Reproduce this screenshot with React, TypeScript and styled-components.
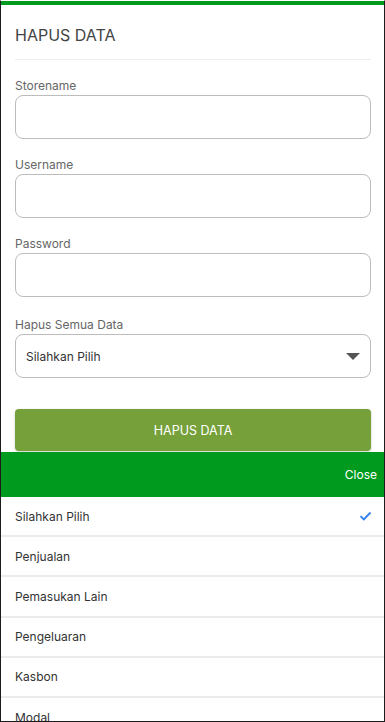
import { createGlobalStyle, styled } from "styled-components";

const GlobalStyle = createGlobalStyle`
  * { box-sizing: border-box; }
  html, body { margin: 0; padding: 0; background: #ffffff; }
  body { font-family: "Inter", "Liberation Sans", sans-serif; }
`;

const Frame = styled.div`
  position: relative;
  width: 385px;
  height: 722px;
  overflow: hidden;
  background: #ffffff;
  border: 1px solid #1c1c1c;
  border-top-color: #ffffff;
`;

const TopBar = styled.div`
  height: 4px;
  background: #009a1e;
`;

const Page = styled.div`
  padding: 0 13px 0 14px;
`;

const Title = styled.h1`
  margin: 0;
  padding: 20px 0 14px;
  font-size: 16px;
  font-weight: 400;
  color: #444444;
  border-bottom: 1px solid #eeeeee;
`;

const Form = styled.form`
  display: flex;
  flex-direction: column;
  padding-top: 19px;
  gap: 19px;
`;

const Field = styled.div<{ $offset?: number }>`
  display: flex;
  flex-direction: column;
  gap: 2px;
  margin-top: ${(p) => p.$offset ?? 0}px;
`;

const Label = styled.label`
  font-size: 12px;
  color: #666666;
  line-height: 14px;
`;

const Input = styled.input`
  height: 44px;
  width: 100%;
  border: 1.5px solid #bcbcbc;
  border-radius: 8px;
  background: #ffffff;
  outline: none;
  font: inherit;
`;

const Select = styled.div`
  height: 44px;
  display: flex;
  align-items: center;
  justify-content: space-between;
  padding: 0 10px 0 10px;
  border: 1.5px solid #bcbcbc;
  border-radius: 8px;
  font-size: 12px;
  color: #333333;
`;

const Caret = styled.span`
  width: 0;
  height: 0;
  border-left: 7px solid transparent;
  border-right: 7px solid transparent;
  border-top: 7px solid #555555;
`;

const SubmitButton = styled.button`
  margin-top: 12px;
  height: 42px;
  border: none;
  border-radius: 4px;
  background: #76a13a;
  color: #ffffff;
  font-family: inherit;
  font-size: 12.5px;
  box-shadow: 0 1px 3px rgba(0, 0, 0, 0.2);
`;

const Sheet = styled.div`
  position: absolute;
  left: 0;
  right: 0;
  bottom: 0;
  top: 451px;
  display: flex;
  flex-direction: column;
  background: #ffffff;
`;

const SheetHeader = styled.div`
  height: 45px;
  flex: none;
  display: flex;
  align-items: center;
  justify-content: flex-end;
  padding-right: 7px;
  background: #009a1e;
  color: #ffffff;
  font-size: 12px;
`;

const OptionList = styled.ul`
  margin: 0;
  padding: 0;
  list-style: none;
  flex: 1;
  overflow-y: scroll;

  &::-webkit-scrollbar { width: 4px; }
  &::-webkit-scrollbar-track { background: transparent; }
  &::-webkit-scrollbar-thumb { background: #c4c4c4; }
`;

const Option = styled.li`
  height: 40.2px;
  display: flex;
  align-items: center;
  justify-content: space-between;
  padding: 0 12px 0 14px;
  border-bottom: 2px solid #ebebeb;
  font-size: 12px;
  color: #333333;
`;

const Check = () => (
  <svg width="13" height="10" viewBox="0 0 13 10">
    <path d="M1.5 5.2 L4.8 8.4 L11.5 1.5" fill="none" stroke="#2f80ed" strokeWidth="1.8" />
  </svg>
);

const options = [
  "Silahkan Pilih",
  "Penjualan",
  "Pemasukan Lain",
  "Pengeluaran",
  "Kasbon",
  "Modal",
  "Pembelian",
  "Hutang",
  "Piutang",
  "Stok Barang",
  "Produk",
  "Pelanggan",
  "Supplier",
  "Semua Data",
];

export default function App() {
  return (
    <>
      <GlobalStyle />
      <Frame>
        <TopBar />
        <Page>
          <Title>HAPUS DATA</Title>
          <Form>
            <Field>
              <Label>Storename</Label>
              <Input />
            </Field>
            <Field>
              <Label>Username</Label>
              <Input />
            </Field>
            <Field>
              <Label>Password</Label>
              <Input type="password" />
            </Field>
            <Field $offset={2}>
              <Label>Hapus Semua Data</Label>
              <Select>
                Silahkan Pilih
                <Caret />
              </Select>
            </Field>
            <SubmitButton type="button">HAPUS DATA</SubmitButton>
          </Form>
        </Page>
        <Sheet>
          <SheetHeader>Close</SheetHeader>
          <OptionList>
            {options.map((o, i) => (
              <Option key={o}>
                {o}
                {i === 0 && <Check />}
              </Option>
            ))}
          </OptionList>
        </Sheet>
      </Frame>
    </>
  );
}
